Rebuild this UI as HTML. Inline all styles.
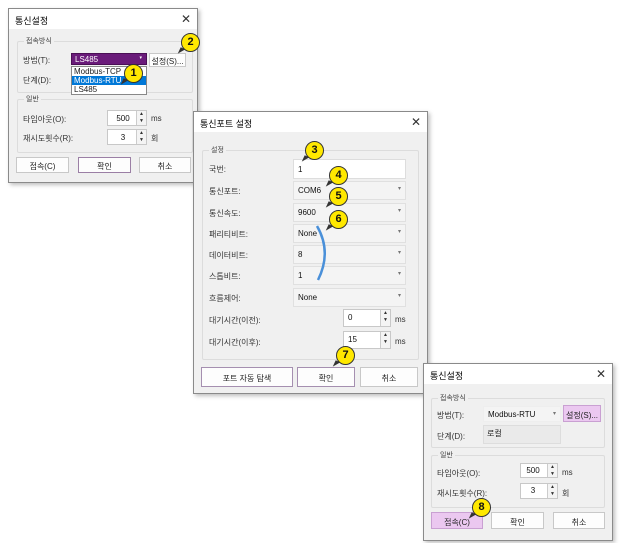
<!DOCTYPE html>
<html><head><meta charset="utf-8"><style>
*{box-sizing:border-box;margin:0;padding:0}
body{width:622px;height:543px;background:#fff;position:relative;overflow:hidden;font-family:"Liberation Sans","Noto Sans CJK KR",sans-serif;font-size:8px;color:#222}
.a{position:absolute}
.dlg{position:absolute;background:#f0f0f0;border:1px solid #8a8a8a;box-shadow:2px 2px 4px rgba(0,0,0,.25)}
.tb{position:absolute;left:0;right:0;top:0;height:20px;background:#fff;font-size:9px;padding:5px 0 0 6px;color:#000}
.x{position:absolute;right:6px;top:3px;font-size:12px;color:#333}
.grp{position:absolute;border:1px solid #dcdcdc;border-radius:2px}
.gl{position:absolute;top:-6px;left:6px;background:#f0f0f0;padding:0 2px;font-size:7px;color:#444}
.lb{position:absolute;font-size:8px;color:#333}
.in{position:absolute;background:#fff;border:1px solid #c8c8c8;font-size:8px;padding:3px 4px;color:#111}
.cb{position:absolute;background:#f4f4f4;border:1px solid #e0e0e0;font-size:8px;padding:3px 4px;color:#111}
.cb:after{content:"▾";position:absolute;right:4px;top:3px;font-size:6px;color:#777}
.btn{position:absolute;background:#fdfdfd;border:1px solid #c8c8c8;font-size:8px;text-align:center;color:#222}
.spin{position:absolute;width:10px;border-left:1px solid #ccc;background:#f4f4f4;right:0;top:0;bottom:0;font-size:5px;text-align:center;line-height:7px;color:#333}
.bd{position:absolute;width:19px;height:19px;border-radius:50%;background:#ffe800;border:1.5px solid #333;font:bold 11px "Liberation Sans",sans-serif;text-align:center;line-height:16px;color:#111}
.bd:before{content:"";position:absolute;left:-3px;bottom:-4px;border-top:7px solid #333;border-right:5px solid transparent;transform:rotate(25deg)}
</style></head><body>

<!-- Dialog 1 -->
<div class="dlg" style="left:8px;top:8px;width:190px;height:175px">
 <div class="tb">통신설정<span class="x">✕</span></div>
 <div class="grp" style="left:8px;top:32px;width:176px;height:52px"><span class="gl">접속방식</span></div>
 <div class="lb" style="left:14px;top:46px">방법(T):</div>
 <div class="a" style="left:62px;top:44px;width:76px;height:12px;background:#6a1b7a;color:#fff;font-size:8px;padding:1px 3px;border:1px solid #4a0f55">LS485<span style="position:absolute;right:4px;font-size:5px">▾</span></div>
 <div class="btn" style="left:140px;top:44px;width:37px;height:14px;padding-top:2px">설정(S)...</div>
 <div class="lb" style="left:14px;top:66px">단계(D):</div>
 <div class="a" style="left:62px;top:57px;width:76px;height:29px;background:#fff;border:1px solid #888;font-size:8px;line-height:9px">
  <div style="padding-left:2px">Modbus-TCP</div>
  <div style="padding-left:2px;background:#0078d7;color:#fff">Modbus-RTU</div>
  <div style="padding-left:2px">LS485</div>
 </div>
 <div class="grp" style="left:8px;top:90px;width:176px;height:54px"><span class="gl">일반</span></div>
 <div class="lb" style="left:14px;top:105px">타임아웃(O):</div>
 <div class="in" style="left:98px;top:101px;width:40px;height:16px;text-align:center;padding-right:12px">500<div class="spin">▲<br>▼</div></div>
 <div class="lb" style="left:142px;top:105px">ms</div>
 <div class="lb" style="left:14px;top:124px">재시도횟수(R):</div>
 <div class="in" style="left:98px;top:120px;width:40px;height:16px;text-align:center;padding-right:12px">3<div class="spin">▲<br>▼</div></div>
 <div class="lb" style="left:142px;top:124px">회</div>
 <div class="btn" style="left:7px;top:148px;width:53px;height:16px;padding-top:3px">접속(C)</div>
 <div class="btn" style="left:69px;top:148px;width:53px;height:16px;padding-top:3px;border-color:#9b7fa5">확인</div>
 <div class="btn" style="left:130px;top:148px;width:52px;height:16px;padding-top:3px">취소</div>
</div>

<!-- Dialog 2 -->
<div class="dlg" style="left:193px;top:111px;width:235px;height:283px">
 <div class="tb">통신포트 설정<span class="x">✕</span></div>
 <div class="grp" style="left:8px;top:38px;width:217px;height:210px"><span class="gl">설정</span></div>
 <div class="lb" style="left:15px;top:52px">국번:</div>
 <div class="in" style="left:99px;top:47px;width:113px;height:20px;padding-top:5px;border-color:#ddd">1</div>
 <div class="lb" style="left:15px;top:74px">통신포트:</div>
 <div class="cb" style="left:99px;top:69px;width:113px;height:19px;padding-top:4px">COM6</div>
 <div class="lb" style="left:15px;top:96px">통신속도:</div>
 <div class="cb" style="left:99px;top:91px;width:113px;height:19px;padding-top:4px">9600</div>
 <div class="lb" style="left:15px;top:117px">패리티비트:</div>
 <div class="cb" style="left:99px;top:112px;width:113px;height:19px;padding-top:4px">None</div>
 <div class="lb" style="left:15px;top:138px">데이터비트:</div>
 <div class="cb" style="left:99px;top:133px;width:113px;height:19px;padding-top:4px">8</div>
 <div class="lb" style="left:15px;top:159px">스톱비트:</div>
 <div class="cb" style="left:99px;top:154px;width:113px;height:19px;padding-top:4px">1</div>
 <div class="lb" style="left:15px;top:181px">흐름제어:</div>
 <div class="cb" style="left:99px;top:176px;width:113px;height:19px;padding-top:4px">None</div>
 <div class="lb" style="left:15px;top:203px">대기시간(이전):</div>
 <div class="in" style="left:149px;top:197px;width:48px;height:18px">0<div class="spin">▲<br>▼</div></div>
 <div class="lb" style="left:201px;top:203px">ms</div>
 <div class="lb" style="left:15px;top:225px">대기시간(이후):</div>
 <div class="in" style="left:149px;top:219px;width:48px;height:18px">15<div class="spin">▲<br>▼</div></div>
 <div class="lb" style="left:201px;top:225px">ms</div>
 <div class="btn" style="left:7px;top:255px;width:92px;height:20px;padding-top:5px;border-color:#a58fb0">포트 자동 탐색</div>
 <div class="btn" style="left:103px;top:255px;width:58px;height:20px;padding-top:5px;border-color:#a58fb0">확인</div>
 <div class="btn" style="left:166px;top:255px;width:58px;height:20px;padding-top:5px">취소</div>
</div>
<svg class="a" style="left:310px;top:222px" width="30" height="62"><path d="M7 4 Q22 30 8 58" stroke="#4a90d9" stroke-width="2.5" fill="none"/></svg>

<!-- Dialog 3 -->
<div class="dlg" style="left:423px;top:363px;width:190px;height:178px">
 <div class="tb">통신설정<span class="x">✕</span></div>
 <div class="grp" style="left:7px;top:34px;width:174px;height:50px"><span class="gl">접속방식</span></div>
 <div class="lb" style="left:13px;top:46px">방법(T):</div>
 <div class="cb" style="left:59px;top:42px;width:78px;height:16px;padding-top:3px;border-color:#eee">Modbus-RTU</div>
 <div class="btn" style="left:139px;top:41px;width:38px;height:17px;padding-top:4px;background:#ebc8f0;border-color:#c9a0d2">설정(S)...</div>
 <div class="lb" style="left:13px;top:67px">단계(D):</div>
 <div class="a" style="left:59px;top:61px;width:78px;height:19px;background:#eaeaea;border:1px solid #ddd;font-size:8px;padding:2px 3px">로컬</div>
 <div class="grp" style="left:7px;top:91px;width:174px;height:53px"><span class="gl">일반</span></div>
 <div class="lb" style="left:13px;top:104px">타임아웃(O):</div>
 <div class="in" style="left:96px;top:99px;width:38px;height:15px;text-align:center;padding:2px 12px 0 0">500<div class="spin">▲<br>▼</div></div>
 <div class="lb" style="left:138px;top:104px">ms</div>
 <div class="lb" style="left:13px;top:124px">재시도횟수(R):</div>
 <div class="in" style="left:96px;top:119px;width:38px;height:16px;text-align:center;padding:2px 12px 0 0">3<div class="spin">▲<br>▼</div></div>
 <div class="lb" style="left:138px;top:124px">회</div>
 <div class="btn" style="left:7px;top:148px;width:52px;height:17px;padding-top:4px;background:#ebc8f0;border-color:#c9a0d2">접속(C)</div>
 <div class="btn" style="left:67px;top:148px;width:53px;height:17px;padding-top:4px">확인</div>
 <div class="btn" style="left:129px;top:148px;width:52px;height:17px;padding-top:4px">취소</div>
</div>

<!-- badges -->
<div class="bd" style="left:124px;top:64px">1</div>
<div class="bd" style="left:181px;top:33px">2</div>
<div class="bd" style="left:305px;top:141px">3</div>
<div class="bd" style="left:329px;top:166px">4</div>
<div class="bd" style="left:329px;top:187px">5</div>
<div class="bd" style="left:329px;top:210px">6</div>
<div class="bd" style="left:336px;top:346px">7</div>
<div class="bd" style="left:472px;top:498px">8</div>
</body></html>
